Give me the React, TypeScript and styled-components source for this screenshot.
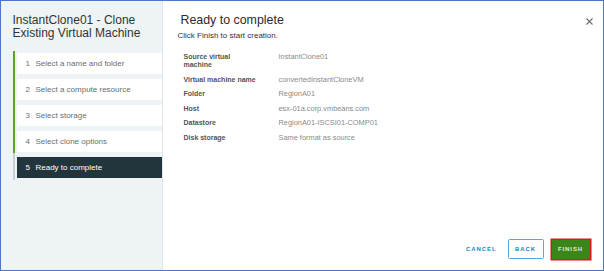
import React from "react";
import styled, { createGlobalStyle } from "styled-components";

const GlobalStyle = createGlobalStyle`
  html, body { margin: 0; padding: 0; background: #fff; }
  body { font-family: "Liberation Sans", Arial, sans-serif; }
  * { box-sizing: border-box; }
`;

const Frame = styled.div`
  width: 604px;
  height: 271px;
  border: 1.5px solid #4a78c6;
  display: flex;
  background: #fff;
`;

const Sidebar = styled.aside`
  width: 161.5px;
  flex: none;
  background: #eef3f6;
  border-right: 1px solid #e2e7eb;
  padding-top: 13px;
  display: flex;
  flex-direction: column;
`;

const WizardTitle = styled.h1`
  margin: 0;
  padding: 0 10px 0 11.5px;
  font-size: 12px;
  line-height: 12.7px;
  font-weight: 400;
  color: #333;
`;

const Steps = styled.div`
  display: flex;
  margin-top: 11.6px;
  padding-left: 11.5px;
`;

const Rail = styled.div`
  width: 2px;
  flex: none;
  display: flex;
  flex-direction: column;
`;

const RailSegment = styled.div<{ $done: boolean; $h: number }>`
  height: ${(p) => p.$h}px;
  background: ${(p) => (p.$done ? "#5fa22a" : "#c9ced2")};
`;

const StepItems = styled.ol`
  list-style: none;
  margin: 0 0 0 2px;
  padding: 2px 0 0;
  flex: 1;
  display: flex;
  flex-direction: column;
  gap: 5px;
`;

const StepItem = styled.li<{ $active?: boolean }>`
  height: 21px;
  display: flex;
  align-items: center;
  gap: 5.5px;
  padding-left: 9px;
  background: ${(p) => (p.$active ? "#22343c" : "#fff")};
  color: ${(p) => (p.$active ? "#fff" : "#6d6d6d")};
  font-size: 8px;
`;

const Main = styled.main`
  flex: 1;
  display: flex;
  flex-direction: column;
  padding: 12px 10px 11px 15px;
`;

const HeaderRow = styled.div`
  display: flex;
  justify-content: space-between;
  align-items: flex-start;
`;

const PageTitle = styled.h2`
  margin: 0;
  padding-left: 3px;
  font-size: 12.4px;
  line-height: 14px;
  font-weight: 400;
  color: #2b2b2b;
`;

const CloseButton = styled.button`
  border: 0;
  background: none;
  padding: 0;
  width: 8px;
  height: 8px;
  margin-top: 4px;
  color: #6b6b6b;
  display: flex;
  align-items: center;
  justify-content: center;
`;

const Subtitle = styled.p`
  margin: 4px 0 0;
  font-size: 8px;
  line-height: 10px;
  color: #333;
`;

const Summary = styled.dl`
  margin: 12px 0 0;
  padding-left: 6px;
  display: grid;
  grid-template-columns: 95px 1fr;
  row-gap: 6.5px;
  line-height: 8px;
`;

const Label = styled.dt`
  font-size: 7px;
  font-weight: 700;
  color: #555;
`;

const Value = styled.dd`
  margin: 0;
  font-size: 7.4px;
  color: #8a8a8a;
`;

const Footer = styled.div`
  margin-top: auto;
  padding-right: 3.5px;
  display: flex;
  justify-content: flex-end;
  align-items: center;
`;

const Button = styled.button<{ $variant: "link" | "outline" | "success" }>`
  font-family: "Liberation Sans", Arial, sans-serif;
  font-size: 6px;
  font-weight: 700;
  letter-spacing: 0.9px;
  padding: 0;
  display: flex;
  align-items: center;
  justify-content: center;
  cursor: pointer;
  ${(p) =>
    p.$variant === "link" &&
    `
    border: 0; background: none; color: #1a86bf; margin-right: 11px;
  `}
  ${(p) =>
    p.$variant === "outline" &&
    `
    width: 36px; height: 20px; border: 1px solid #55aad6; background: #fff;
    color: #1a7fb6; border-radius: 1.5px; margin-right: 8px;
  `}
  ${(p) =>
    p.$variant === "success" &&
    `
    width: 38px; height: 19px; border: 0; background: #3b8618; color: #e3eed8;
    box-shadow: 0 0 0 1.5px #e3131b;
  `}
`;

const steps = [
  "Select a name and folder",
  "Select a compute resource",
  "Select storage",
  "Select clone options",
  "Ready to complete",
];

const rows: [React.ReactNode, string][] = [
  [<>Source virtual<br />machine</>, "InstantClone01"],
  ["Virtual machine name", "convertedInstantCloneVM"],
  ["Folder", "RegionA01"],
  ["Host", "esx-01a.corp.vmbeans.com"],
  ["Datastore", "RegionA01-ISCSI01-COMP01"],
  ["Disk storage", "Same format as source"],
];

export default function App() {
  return (
    <>
      <GlobalStyle />
      <Frame>
        <Sidebar>
          <WizardTitle>InstantClone01 - Clone Existing Virtual Machine</WizardTitle>
          <Steps>
            <Rail>
              <RailSegment $done $h={102} />
              <RailSegment $done={false} $h={27} />
            </Rail>
            <StepItems>
              {steps.map((s, i) => (
                <StepItem key={s} $active={i === steps.length - 1}>
                  <span>{i + 1}</span>
                  <span>{s}</span>
                </StepItem>
              ))}
            </StepItems>
          </Steps>
        </Sidebar>
        <Main>
          <HeaderRow>
            <PageTitle>Ready to complete</PageTitle>
            <CloseButton aria-label="Close">
              <svg width="7" height="7" viewBox="0 0 7 7">
                <path d="M0.5 0.5 L6.5 6.5 M6.5 0.5 L0.5 6.5" stroke="currentColor" strokeWidth="1.1" />
              </svg>
            </CloseButton>
          </HeaderRow>
          <Subtitle>Click Finish to start creation.</Subtitle>
          <Summary>
            {rows.map(([l, v], i) => (
              <React.Fragment key={i}>
                <Label>{l}</Label>
                <Value>{v}</Value>
              </React.Fragment>
            ))}
          </Summary>
          <Footer>
            <Button $variant="link">CANCEL</Button>
            <Button $variant="outline">BACK</Button>
            <Button $variant="success">FINISH</Button>
          </Footer>
        </Main>
      </Frame>
    </>
  );
}
